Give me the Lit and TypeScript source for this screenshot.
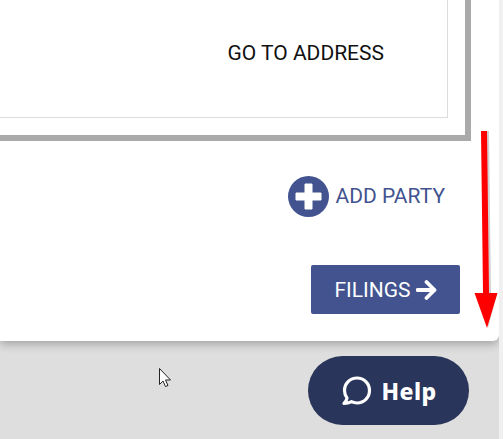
import { LitElement, html, css } from "lit";
import { customElement } from "lit/decorators.js";

@customElement("app-root")
export class AppRoot extends LitElement {
  static styles = css`
    :host {
      display: block;
      width: 503px;
      height: 439px;
      position: relative;
      overflow: hidden;
      background: #dedede;
      font-family: Roboto, "Liberation Sans", sans-serif;
    }
    .page { display: flex; height: 100%; }
    .main { width: 499px; flex: none; }
    .strip { flex: 1; background: #f0f0f0; height: 100%; }
    .card {
      height: 341px;
      box-sizing: border-box;
      background: #fff;
      border-radius: 0 0 6px 0;
      box-shadow: 0 3px 10px rgba(0, 0, 0, 0.28);
      display: flex;
      flex-direction: column;
      align-items: flex-end;
      padding-right: 28px;
    }
    .outer {
      box-sizing: border-box;
      width: 520px;
      height: 141px;
      border: solid #aaaaaa;
      border-width: 0 6px 6px 0;
      padding: 0 17px 17px 0;
      flex: none;
    }
    .inner {
      box-sizing: border-box;
      height: 118px;
      border: solid #dcdcdc;
      border-width: 0 1px 1px 0;
      display: flex;
      justify-content: flex-end;
      padding: 41px 63px 0 0;
      font-size: 21px;
      line-height: 24px;
      color: #111;
    }
    .add {
      display: flex;
      align-items: center;
      gap: 7px;
      margin-top: 34px;
      color: #42538f;
      font-size: 21px;
      line-height: 42px;
      margin-right: 26px;
      align-self: flex-end;
    }
    .add svg { display: block; }
    .filings {
      margin-top: 48px;
      margin-right: 11px;
      width: 149px;
      height: 49px;
      box-sizing: border-box;
      background: #42538f;
      color: #fff;
      border-radius: 2px;
      display: flex;
      align-items: center;
      justify-content: center;
      gap: 5px;
      font-size: 21px;
      font-weight: 400;
    }
    .help {
      position: absolute;
      left: 308px;
      top: 356px;
      width: 161px;
      height: 69px;
      border-radius: 35px;
      background: #29355a;
      color: #fff;
      display: flex;
      align-items: center;
      justify-content: center;
      gap: 10px;
      padding-left: 1px;
      box-sizing: border-box;
      font-family: "Noto Sans", "Open Sans", sans-serif;
      font-weight: 800;
      font-size: 23px;
      letter-spacing: 0.4px;
    }
    .overlay { position: absolute; left: 0; top: 0; pointer-events: none; }
  `;

  render() {
    return html`
      <div class="page">
        <div class="main">
          <div class="card">
            <div class="outer"><div class="inner">GO TO ADDRESS</div></div>
            <div class="add">
              <svg width="41" height="41" viewBox="0 0 41 41">
                <circle cx="20.5" cy="20.5" r="20.5" fill="#42538f" />
                <path d="M17 8h7v9h9v7h-9v9h-7v-9H8v-7h9z" fill="#fff" stroke="#fff" stroke-linejoin="round" />
              </svg>
              <span>ADD PARTY</span>
            </div>
            <div class="filings">
              <span>FILINGS</span>
              <svg width="21" height="20" viewBox="1 0 21 20">
                <path d="M2.500 10h17M11.500 2l8 8-8 8" fill="none" stroke="#fff" stroke-width="3.800" stroke-linecap="round" stroke-linejoin="round" />
              </svg>
            </div>
          </div>
        </div>
        <div class="strip"></div>
      </div>
      <div class="help">
        <svg width="30" height="31" viewBox="0 0 30 31">
          <path d="M5 23C3 20.500 2.500 18 2.500 15.500C2.500 8.500 8 3 15 3S27.500 8.500 27.500 15.500S22 28 15 28C13 28 11 27.500 9.500 26.700C7.500 27.800 5 28.500 2 28.500C3.500 27 4.700 25.500 5 23Z" fill="none" stroke="#fff" stroke-width="3.200" stroke-linejoin="round" />
        </svg>
        <span>Help</span>
      </div>
      <svg class="overlay" width="503" height="439" viewBox="0 0 503 439">
        <path d="M487 131h2l2 163h6l-9 34-1-34z" fill="#777" opacity="0.35" />
        <path d="M481 131h6l2 162h8.500l-10.500 35-12.500-35h8.500z" fill="#ff0000" />
        <path d="M159.500 368.500v16l3.500-3.500 2.500 5.500 2.500-1-2.500-5.500h5z" fill="#fff" stroke="#222" stroke-width="1" />
      </svg>
    `;
  }
}
